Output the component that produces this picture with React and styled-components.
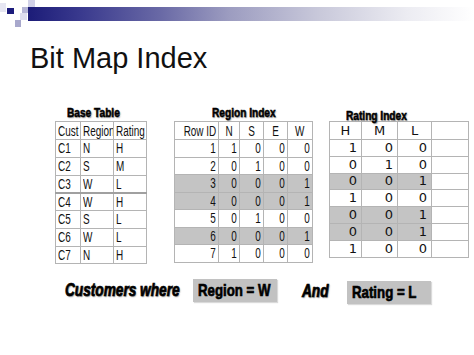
import styled, { createGlobalStyle } from 'styled-components'

const GlobalStyle = createGlobalStyle`
  html, body { margin: 0; padding: 0; background: #fff; }
  body { font-family: "Liberation Sans", Arial, sans-serif; color: #111; }
`

const base = [
  ['C1', 'N', 'H'],
  ['C2', 'S', 'M'],
  ['C3', 'W', 'L'],
  ['C4', 'W', 'H'],
  ['C5', 'S', 'L'],
  ['C6', 'W', 'L'],
  ['C7', 'N', 'H'],
]

const region = [
  { id: 1, bits: [1, 0, 0, 0] },
  { id: 2, bits: [0, 1, 0, 0] },
  { id: 3, bits: [0, 0, 0, 1], hit: true },
  { id: 4, bits: [0, 0, 0, 1], hit: true },
  { id: 5, bits: [0, 1, 0, 0] },
  { id: 6, bits: [0, 0, 0, 1], hit: true },
  { id: 7, bits: [1, 0, 0, 0] },
]

const rating = [
  { bits: [1, 0, 0] },
  { bits: [0, 1, 0] },
  { bits: [0, 0, 1], hit: true },
  { bits: [1, 0, 0] },
  { bits: [0, 0, 1], hit: true },
  { bits: [0, 0, 1], hit: true },
  { bits: [1, 0, 0] },
]

const App = () => {
  return (
    <Slide>
      <GlobalStyle />
      <Header>
        <Squares width="36" height="28" viewBox="0 0 36 28">
          <rect x="0" y="3" width="6" height="9" fill="#e6e6f2" />
          <rect x="7" y="8" width="7" height="6" fill="#1c1c7c" />
          <rect x="28" y="0" width="7" height="7" fill="#d2d2e8" />
          <rect x="22" y="7" width="6" height="6" fill="#b6b6d6" />
          <rect x="20" y="13" width="7" height="7" fill="#dedeee" />
          <rect x="15" y="20" width="6" height="7" fill="#a8a8cc" />
        </Squares>
        <Bar />
      </Header>

      <Title>Bit Map Index</Title>

      <Tables>
        <Block $width={92}>
          <Caption><Bold>Base Table</Bold></Caption>
          <Grid>
            <tbody>
              <tr>
                <Th $w={25} $align="left"><Narrow $o="left">Cust</Narrow></Th>
                <Th $w={33} $align="left"><Narrow $o="left">Region</Narrow></Th>
                <Th $w={33} $align="left"><Narrow $o="left">Rating</Narrow></Th>
              </tr>
              {base.map((r, i) => (
                <tr key={r[0]}>
                  {r.map((c, j) => (
                    <Td key={j} $h={17.75} $align="left" $split={i === 3}>
                      <Narrow $o="left">{c}</Narrow>
                    </Td>
                  ))}
                </tr>
              ))}
            </tbody>
          </Grid>
        </Block>

        <Block $width={139}>
          <Caption><Bold $o="center">Region Index</Bold></Caption>
          <Grid>
            <tbody>
              <tr>
                <Th $w={44}><Narrow>Row ID</Narrow></Th>
                <Th $w={21}><Narrow>N</Narrow></Th>
                <Th $w={24}><Narrow>S</Narrow></Th>
                <Th $w={24}><Narrow>E</Narrow></Th>
                <Th $w={25}><Narrow>W</Narrow></Th>
              </tr>
              {region.map((r) => (
                <tr key={r.id}>
                  <Td $h={17.5} $hit={r.hit}><Narrow $o="right">{r.id}</Narrow></Td>
                  {r.bits.map((b, j) => (
                    <Td key={j} $h={17.5} $hit={r.hit}><Narrow $o="right">{b}</Narrow></Td>
                  ))}
                </tr>
              ))}
            </tbody>
          </Grid>
        </Block>

        <Block $width={140}>
          <Caption $offset={17} $drop={3}><Bold>Rating Index</Bold></Caption>
          <Grid $round>
            <tbody>
              <tr>
                <Th $w={32}>H</Th>
                <Th $w={36}>M</Th>
                <Th $w={34}>L</Th>
                <Th $w={37}></Th>
              </tr>
              {rating.map((r, i) => (
                <tr key={i}>
                  {r.bits.map((b, j) => (
                    <Td key={j} $h={16.8} $hit={r.hit} $pad={4}>{b}</Td>
                  ))}
                  <Td $h={16.8}></Td>
                </tr>
              ))}
            </tbody>
          </Grid>
        </Block>
      </Tables>

      <Query>
        <Phrase $w={114}><Bold $size={17.5} $italic>Customers where</Bold></Phrase>
        <Cond $gap={14}><Bold $size={17} $s={0.78}>Region = W</Bold></Cond>
        <Phrase $w={26} $gap={25} $drop={1}><Bold $size={17.5} $italic>And</Bold></Phrase>
        <Cond $gap={19} $drop={2}><Bold $size={17} $s={0.78}>Rating = L</Bold></Cond>
      </Query>
    </Slide>
  )
}

export default App

const Slide = styled.div`
  width: 474px;
  height: 355px;
  overflow: hidden;
  display: flex;
  flex-direction: column;
`

const Header = styled.div`
  position: relative;
  height: 28px;
  display: flex;
`

const Squares = styled.svg`
  position: absolute;
  left: 0;
  top: 0;
`

const Bar = styled.div`
  margin: 7px 0 0 28px;
  flex: 1;
  height: 14px;
  background: linear-gradient(to right, #1c1c78 0%, #3a3a8e 12%, #6a6aa6 30%, #9c9cc0 45%, #c8c8da 65%, #ececf2 85%, #fff 100%);
`

const Title = styled.h1`
  margin: 14px 0 0 30px;
  font-family: "Liberation Sans", Arial, sans-serif;
  font-weight: normal;
  font-size: 29px;
  line-height: 33px;
  color: #111;
`

const Tables = styled.div`
  display: flex;
  align-items: flex-start;
  margin-top: 28px;
  padding-left: 55px;
  & > div:nth-child(2) { margin-left: 27px; }
  & > div:nth-child(3) { margin-left: 16px; }
`

const Block = styled.div`
  width: ${(p) => p.$width}px;
  display: flex;
  flex-direction: column;
`

const Caption = styled.div`
  height: 18px;
  line-height: 18px;
  padding-top: ${(p) => p.$drop || 0}px;
  margin-bottom: ${(p) => -(p.$drop || 0)}px;
  padding-left: ${(p) => p.$offset || 0}px;
  text-align: ${(p) => (p.$offset ? 'left' : 'center')};
  white-space: nowrap;
  position: relative;
  z-index: 1;
`

/* heavy condensed lettering, in the manner of Impact */
const Bold = styled.span`
  display: inline-block;
  white-space: nowrap;
  font-family: "Liberation Sans", Arial, sans-serif;
  font-weight: bold;
  font-style: ${(p) => (p.$italic ? 'italic' : 'normal')};
  font-size: ${(p) => p.$size || 13}px;
  color: #000;
  -webkit-text-stroke: ${(p) => (p.$size ? 0.7 : 0.5)}px #000;
  text-shadow: ${(p) => (p.$italic || !p.$size ? '1px 1px 1.5px #888' : 'none')};
  transform: scaleX(${(p) => p.$s || 0.78});
  transform-origin: ${(p) => p.$o || 'left'} center;
`

const Narrow = styled.span`
  display: inline-block;
  white-space: nowrap;
  transform: scaleX(0.71);
  transform-origin: ${(p) => p.$o || 'center'} center;
`

const Grid = styled.table`
  border-collapse: collapse;
  table-layout: fixed;
  width: 100%;
  font-family: ${(p) => (p.$round ? '"DejaVu Sans", sans-serif' : '"Liberation Sans", Arial, sans-serif')};
  font-size: ${(p) => (p.$round ? '13px' : '14px')};
  color: #111;
`

const Th = styled.td`
  width: ${(p) => p.$w}px;
  height: 18px;
  padding: 0 2px;
  box-sizing: border-box;
  border: 1px solid #b4b4b4;
  text-align: ${(p) => p.$align || 'center'};
  line-height: 16px;
  white-space: nowrap;
  overflow: hidden;
`

const Td = styled.td`
  height: ${(p) => p.$h}px;
  padding: 0 ${(p) => p.$pad || 2}px 0 2px;
  box-sizing: border-box;
  border: 1px solid #b4b4b4;
  border-top: ${(p) => (p.$split ? '2px double #a0a0a0' : '1px solid #b4b4b4')};
  background: ${(p) => (p.$hit ? '#c4c4c4' : '#fff')};
  text-align: ${(p) => p.$align || 'right'};
  line-height: 14px;
  white-space: nowrap;
  overflow: hidden;
`

const Query = styled.div`
  display: flex;
  align-items: flex-start;
  margin-top: 15px;
  padding-left: 65px;
`

const Phrase = styled.div`
  flex: none;
  width: ${(p) => p.$w}px;
  height: 23px;
  line-height: 23px;
  margin-left: ${(p) => p.$gap || 0}px;
  margin-top: ${(p) => p.$drop || 0}px;
  white-space: nowrap;
`

const Cond = styled.div`
  flex: none;
  margin-left: ${(p) => p.$gap}px;
  margin-top: ${(p) => p.$drop || 0}px;
  width: 84px;
  height: 23px;
  line-height: 23px;
  box-sizing: border-box;
  padding-left: 5px;
  background: #c2c2c2;
  box-shadow: 1px 1px 1px #dadada;
  white-space: nowrap;
`
